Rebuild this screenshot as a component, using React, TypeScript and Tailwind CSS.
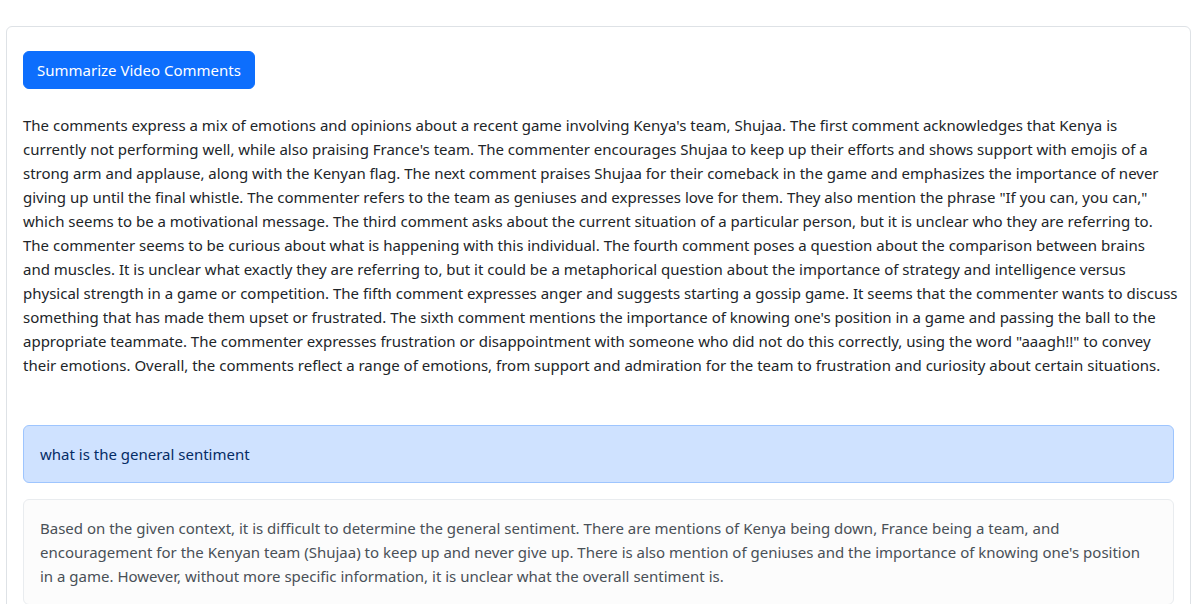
import React from 'react';

// line breaks follow the screenshot
const summaryLines = [
  "The comments express a mix of emotions and opinions about a recent game involving Kenya's team, Shujaa. The first comment acknowledges that Kenya is",
  "currently not performing well, while also praising France's team. The commenter encourages Shujaa to keep up their efforts and shows support with emojis of a",
  'strong arm and applause, along with the Kenyan flag. The next comment praises Shujaa for their comeback in the game and emphasizes the importance of never',
  'giving up until the final whistle. The commenter refers to the team as geniuses and expresses love for them. They also mention the phrase "If you can, you can,"',
  'which seems to be a motivational message. The third comment asks about the current situation of a particular person, but it is unclear who they are referring to.',
  'The commenter seems to be curious about what is happening with this individual. The fourth comment poses a question about the comparison between brains',
  'and muscles. It is unclear what exactly they are referring to, but it could be a metaphorical question about the importance of strategy and intelligence versus',
  'physical strength in a game or competition. The fifth comment expresses anger and suggests starting a gossip game. It seems that the commenter wants to discuss',
  "something that has made them upset or frustrated. The sixth comment mentions the importance of knowing one's position in a game and passing the ball to the",
  'appropriate teammate. The commenter expresses frustration or disappointment with someone who did not do this correctly, using the word "aaagh!!" to convey',
  'their emotions. Overall, the comments reflect a range of emotions, from support and admiration for the team to frustration and curiosity about certain situations.',
];

const answerLines = [
  'Based on the given context, it is difficult to determine the general sentiment. There are mentions of Kenya being down, France being a team, and',
  "encouragement for the Kenyan team (Shujaa) to keep up and never give up. There is also mention of geniuses and the importance of knowing one's position",
  'in a game. However, without more specific information, it is unclear what the overall sentiment is.',
];

function Lines({ lines }: { lines: string[] }) {
  return (
    <>
      {lines.map((l, i) => (
        <span key={i} className="block whitespace-nowrap">
          {l}
        </span>
      ))}
    </>
  );
}

export default function App() {
  return (
    <div className="min-h-screen bg-white pt-[26px] pl-[6px] pr-[1px] font-['Noto_Sans',sans-serif] text-[15px] leading-6 text-[#212529]">
      <div className="rounded-md border border-[#dee2e6] px-4 pt-6 pb-4">
        <button className="rounded-md border border-[#0d6efd] bg-[#0d6efd] px-[13px] py-[6px] text-white">
          Summarize Video Comments
        </button>

        <p className="mt-6 mb-12">
          <Lines lines={summaryLines} />
        </p>

        <div className="mb-4 rounded-md border border-[#9ec5fe] bg-[#cfe2ff] p-4 text-[#052c65]">
          what is the general sentiment
        </div>

        <div className="rounded-md border border-[#e9ecef] bg-[#fcfcfc] p-4 text-[#495057]">
          <Lines lines={answerLines} />
        </div>
      </div>
    </div>
  );
}
